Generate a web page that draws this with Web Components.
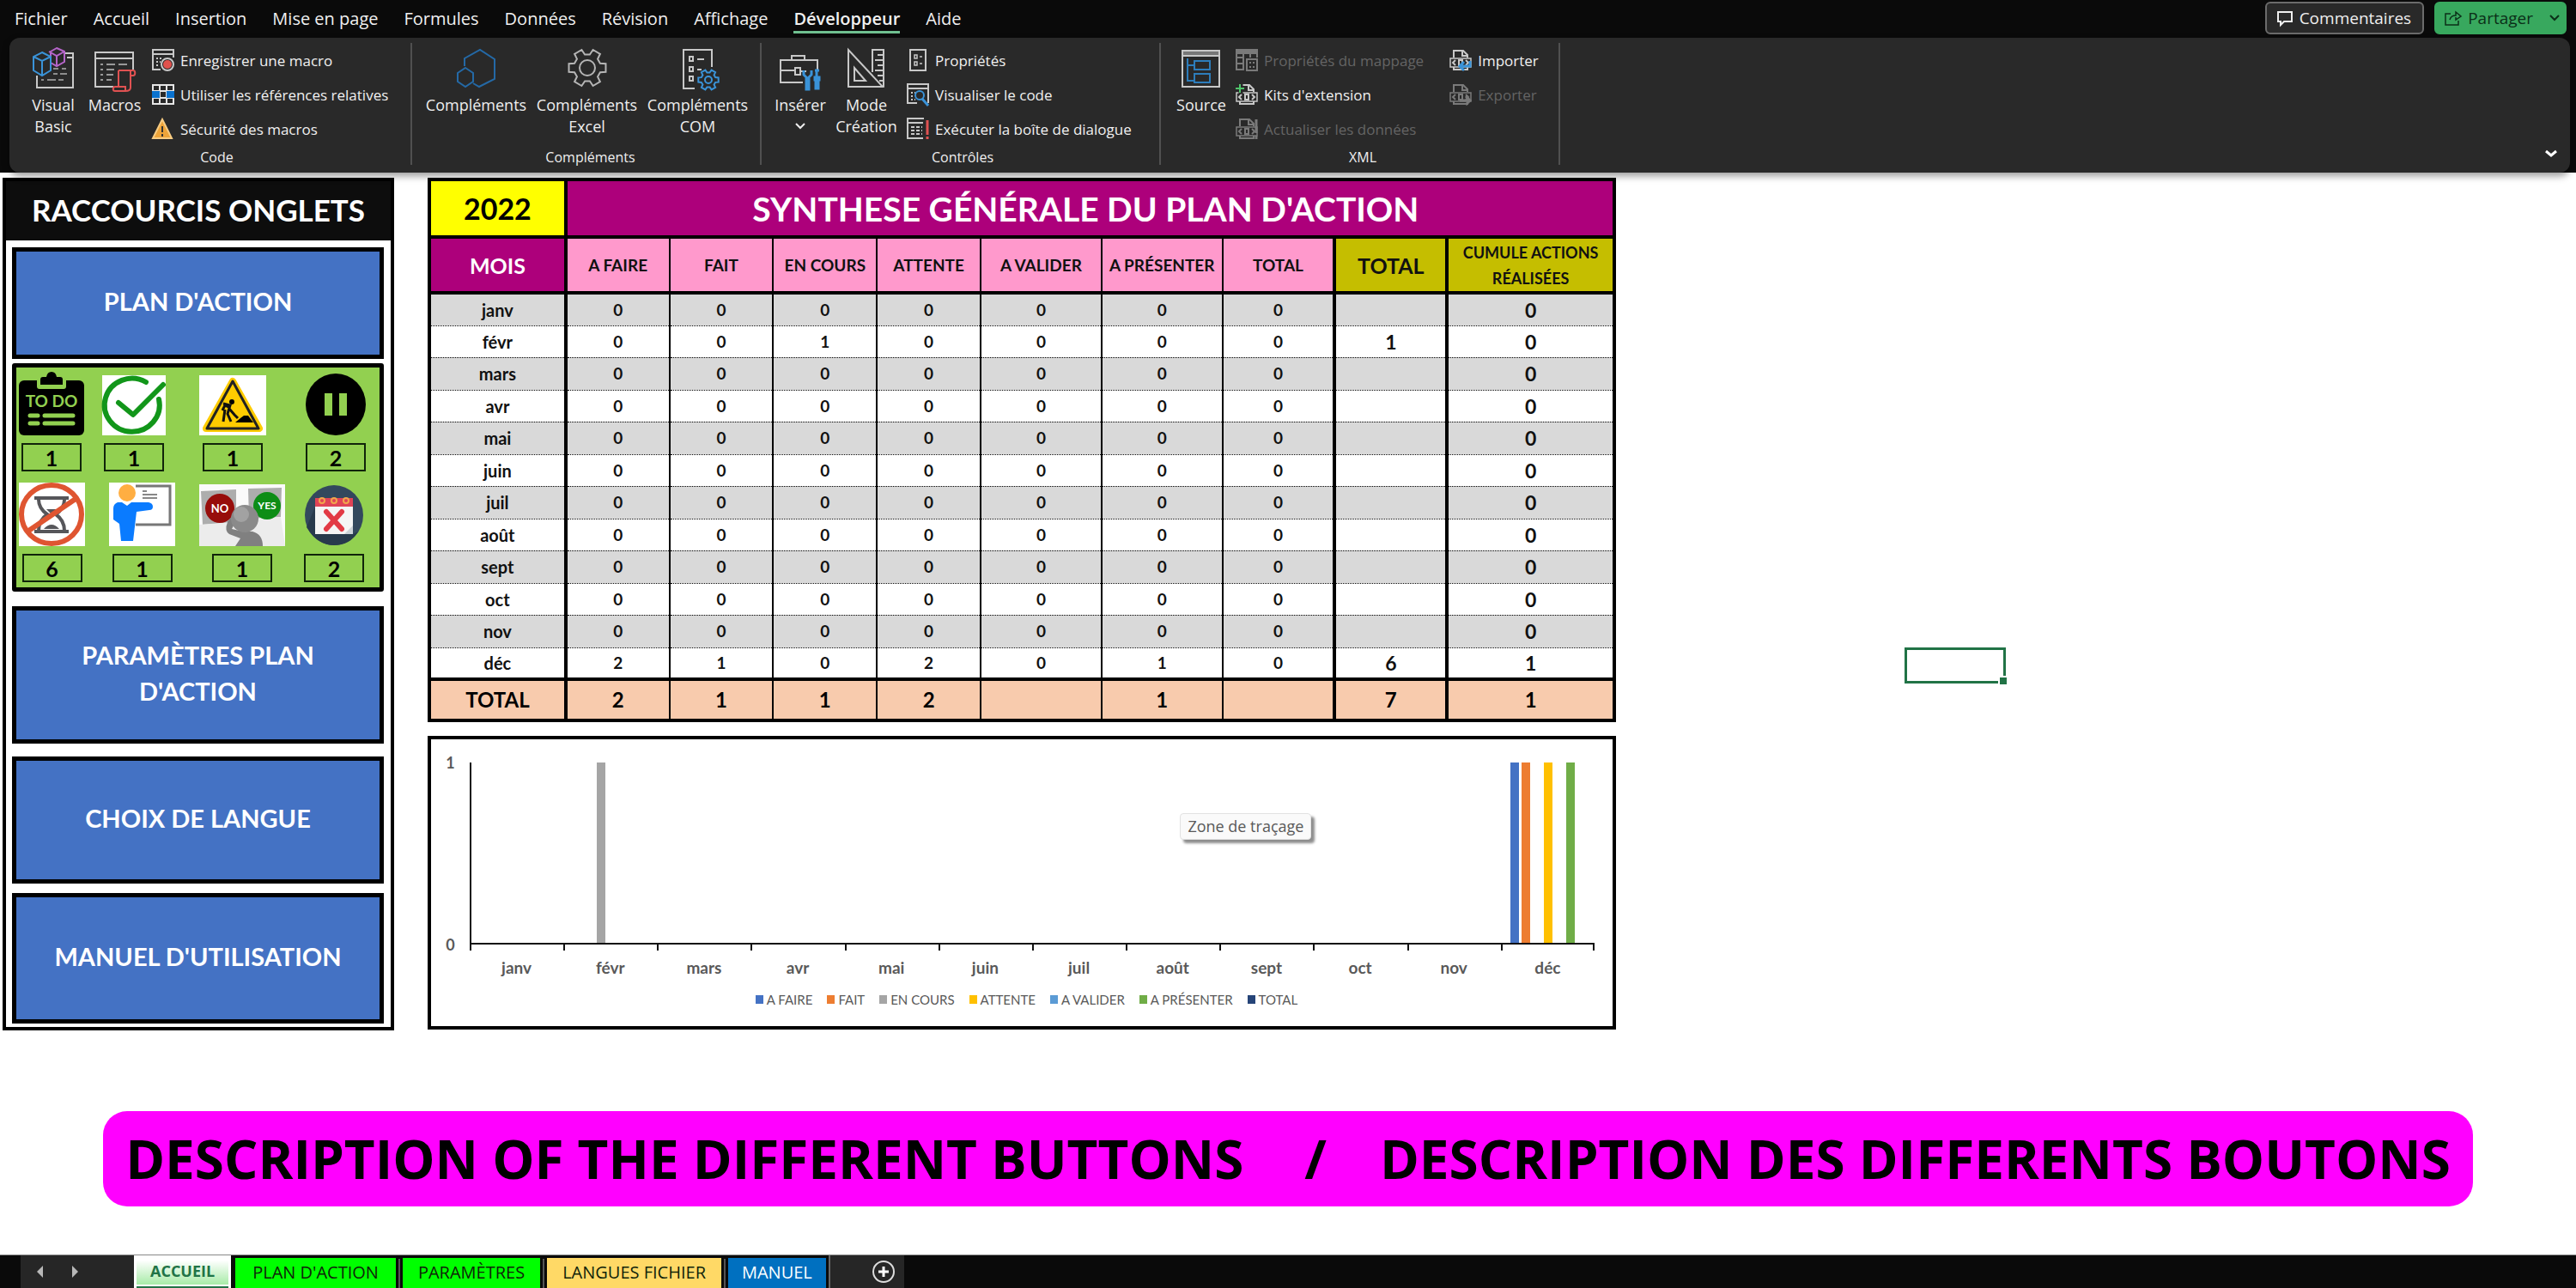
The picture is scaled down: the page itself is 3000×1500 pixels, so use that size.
<!DOCTYPE html>
<html lang="fr">
<head>
<meta charset="utf-8">
<title>Plan d'action</title>
<style>
  body { margin: 0; background: #fff; font-family: "Open Sans", "Noto Sans", sans-serif; }
</style>
</head>
<body>
<excel-app></excel-app>

<script>
const define = (name, render) => customElements.define(name, class extends HTMLElement {
  connectedCallback() {
    if (this.shadowRoot) return;
    const root = this.attachShadow({ mode: "open" });
    const t = document.createElement("template");
    t.innerHTML = typeof render === "function" ? render(this) : render;
    root.append(t.content.cloneNode(true));
  }
});

const G = "#c8c8c8", B = "#3a93d8", R = "#e05252", D = "#7a7a7a";
const gear = (cx, cy, rx, ry) => {
  let p = [];
  for (let i = 0; i < 6; i++) {
    const a = (i * 60 - 90) * Math.PI / 180;
    const at = (d, k) => `${(cx + rx * k * Math.cos(a + d)).toFixed(1)} ${(cy + ry * k * Math.sin(a + d)).toFixed(1)}`;
    p.push(at(-.34, .72), at(-.22, 1), at(.22, 1), at(.34, .72));
  }
  return `M${p.join("L")}Z`;
};
const xmlDoc = c => `<g fill="none" stroke="${c}" stroke-width="2"><path d="M5 10V2h11l5 5v3M15 2v6h6M5 21v3h16v-3"/><path d="M1 11h24v10H1z" stroke-width="1.5"/><path d="M7 13l-3 3 3 3M19 13l3 3-3 3M11 13h4v6h-4z"/></g>`;
const icons = {
  vb: [48, 48, `<g fill="none" stroke-width="2"><g stroke="${G}"><path d="M38 7h9v40H5V33M40 12h7"/><path d="M34 25h5M24 31h5m3 0h8M10 38h3m4 0h10m3 0h6M24 25h6" stroke="#8d8d8d"/></g><path stroke="#b565c9" d="M28 1l9 4v12l-9 5-7-4V5zM19 5l9 5 9-5M28 10v12"/><path stroke="${B}" d="M11 6l10 5v16l-10 6-10-6V11zM1 11l10 5 10-5M11 16v17"/></g>`],
  macros: [48, 52, `<g fill="none" stroke-width="2"><path stroke="${G}" d="M22 46H1V6h44v20M1 13h44"/><path stroke="#999" d="M7 20h3m4 0h10m4 0h10M7 26h3m4 0h9M7 32h3m4 0h8M7 38h3m4 0h6"/><path stroke="${R}" d="M28 27h17c3 0 3 6 0 6h-3v14c0 4-4 4-6 4H24c-3 0-3-5 0-5h4V27M24 46h12v5M42 33V28"/></g>`],
  record: [26, 26, `<g fill="none" stroke="${G}" stroke-width="2"><path d="M10 24H1V1h24v9M1 6h24"/><path stroke-dasharray="2 2" d="M5 11h8M5 15h5M5 19h4"/></g><circle cx="18" cy="18" r="7" fill="#292929" stroke="${G}" stroke-width="2"/><circle cx="18" cy="18" r="5" fill="#e0524d"/>`],
  grid: [26, 24, `<path fill="#e6e6e6" d="M0 0h26v24H0z"/><path fill="#292929" d="M2 2h6v5H2zm8 0h6v5h-6zm8 0h6v5h-6zM10 9h6v6h-6zM2 17h6v5H2zm8 0h6v5h-6zm8 0h6v5h-6z"/><path fill="#0a72cf" d="M0 8h9v8H0zM17 8h9v8h-9z"/>`],
  warn: [26, 26, `<path d="M12 2 23 24H1z" fill="#eda43a" stroke="#f8cc83" stroke-width="2"/><path d="M12 10v7m0 2v3" stroke="#333" stroke-width="2"/>`],
  hex: [48, 48, `<g fill="none" stroke="#2469a6" stroke-width="2"><path d="M10 22V13L28 3l17 11v23L27 46l-7-4"/><path d="M11 24l9 6v10l-9 6-9-6V30z"/></g>`],
  gear: [48, 48, `<g fill="none" stroke="#b5b5b5" stroke-width="2"><path transform="rotate(30 24 24)" d="${gear(24, 24, 22, 22)}"/><circle cx="24" cy="24" r="9"/></g>`],
  com: [48, 52, `<g fill="none" stroke-width="2" transform="translate(4)"><path stroke="${G}" d="M16 48H3V3h33v20M10 11h4v5h-4zM10 23h4v5h-4zM10 34h4v5h-4zM19 14h8M19 26h5"/><path stroke="${B}" transform="rotate(30 32 38)" d="${gear(32, 38, 12, 12)}"/><circle stroke="${B}" cx="32" cy="38" r="4"/></g>`],
  insert: [50, 52, `<g fill="none" stroke-width="2"><path stroke="${G}" d="M28 41H2V15h43v12M15 15v-5h15v5M2 27h17M19 24h6v8h-6zM25 28h7"/><path stroke="${B}" stroke-width="3" d="M29 27v5l3 3v14h3V35l3-3v-5M44 27v7m-2 1h5v3h-1v10h-3V38h-1zM42 27h5"/></g>`],
  design: [48, 48, `<g fill="none" stroke="${G}" stroke-width="2"><path d="M3 3v43h40zM10 24v15h13zM31 29V3h13v43M37 9h7M34 15h10M37 21h7M34 27h10M37 33h7M39 39h5"/></g>`],
  source: [48, 48, `<path fill="#777" d="M2 4h43v6H2z"/><g fill="none" stroke-width="2"><path stroke="${G}" d="M2 4h43v42H2zM2 10h43"/><path stroke="#2d7dbb" d="M8 13v26h8M8 21h8M16 16h18v10H16zM16 31h18v10H16z"/></g>`],
  props: [26, 26, `<g fill="none" stroke="${G}" stroke-width="2"><path d="M4 1h18v24H4z"/><path stroke-width="1.500" d="M9 7h3v4H9zM9 15h3v4H9zM15 9h3M15 17h3"/></g>`],
  code: [26, 26, `<g fill="none" stroke="${G}" stroke-width="2"><path d="M12 23H1V1h24v22M1 6h24"/><path stroke-dasharray="2 2" d="M5 11h5M5 15h4M5 19h5"/><g stroke="${B}"><circle cx="15" cy="14" r="5"/><path d="M18 18l7 8" stroke-width="3"/></g></g>`],
  run: [26, 26, `<g fill="none" stroke="${G}" stroke-width="2"><path d="M19 24H1V1h19M1 6h18"/><path stroke-dasharray="4 2" d="M5 11h13M5 15h13M5 19h13"/><path stroke="${R}" stroke-width="3" d="M24 3v17m0 2v3"/></g>`],
  map: [26, 26, `<path fill="${D}" d="M1 1h24v5H1z"/><g fill="none" stroke="${D}" stroke-width="2"><path d="M10 24H1V1h24v9M1 10h9M1 17h9M9 6v18M17 6v4M13 12h12v13H13z"/><path stroke-dasharray="2 2" d="M16 16h7M16 21h7"/></g>`],
  kit: [26, 26, xmlDoc(G) + `<path d="M0 6h12M6 0v12" stroke="#292929" stroke-width="5"/><path d="M0 6h10M5 1v10" stroke="#4fc46a" stroke-width="2"/>`],
  refresh: [26, 26, xmlDoc(D) + `<path d="M24 2v16m0 3v4" stroke="${D}" stroke-width="3"/>`],
  import: [26, 26, xmlDoc(G) + `<path d="M24 14v6H12m5-5-5 5 5 5" fill="none" stroke="${B}" stroke-width="3"/>`],
  export: [26, 26, xmlDoc(D) + `<path d="M12 20h12m-5-5 5 5-5 5" fill="none" stroke="${D}" stroke-width="3"/>`],
  chevron: [12, 8, `<path d="M1 1l5 5 5-5" fill="none" stroke="currentColor" stroke-width="2"/>`],
  more: [14, 10, `<path d="M1 2l6 5 6-5" fill="none" stroke="currentColor" stroke-width="3"/>`],
  comment: [20, 20, `<path d="M2 3h16v11H9l-4 4v-4H2z" fill="none" stroke="currentColor" stroke-width="2"/>`],
  share: [20, 20, `<path d="M7 5H1v13h15v-5M6 12c1-4 4-5 7-5V3l6 5-6 4V9" fill="none" stroke="currentColor" stroke-width="1.500"/>`],
  prev: [8, 14, `<path d="M8 0v14L1 7z" fill="#b8b8b8"/>`],
  next: [8, 14, `<path d="M0 0v14l7-7z" fill="#b8b8b8"/>`],
  plus: [28, 28, `<circle cx="14" cy="14" r="12" fill="none" stroke="#ddd" stroke-width="2"/><path d="M14 8v12M8 14h12" stroke="#fff" stroke-width="3"/>`],

  todo: [76, 74, `<rect y="10" width="76" height="64" rx="6"/><path d="M21 10h34v7q0 3-3 3H24q-3 0-3-3z" fill="#92d050"/><path d="M25 15V9q0-3 3-3h4q1-6 6-6t6 6h4q3 0 3 3v6z"/><text x="38" y="41" text-anchor="middle" font-family="Lato" font-weight="700" font-size="19" fill="#92d050">TO DO</text><path d="M13 51h9m8 0h33M13 60h9m8 0h33" stroke="#92d050" stroke-width="5" stroke-linecap="round"/>`],
  done: [74, 70, `<path fill="#fff" d="M0 0h74v70H0z"/><path d="M51 8A32 31 0 1 0 66 28M19 32l17 14L71 11" fill="none" stroke="#12961a" stroke-width="6" stroke-linecap="round" stroke-linejoin="round"/>`],
  works: [78, 70, `<path fill="#fff" d="M0 0h78v70H0z"/><path d="M39 7 70 62H8z" fill="#fc0" stroke="#fc0" stroke-width="8" stroke-linejoin="round"/><path d="M39 7 69 62H9z" fill="#fc0" stroke="#222" stroke-width="3" stroke-linejoin="round"/><circle cx="38" cy="31" r="3"/><path d="M28 33l8 2-3 10 4 9M30 40l-2 14M36 38l-6-3-3 6M35 39l6 7 4 4" fill="none" stroke="#111" stroke-width="3"/><path d="M42 55l6-5 4-3h5l6 8z"/>`],
  pause: [70, 72, `<ellipse cx="35" cy="36" rx="35" ry="36"/><path d="M22 23h9v26h-9zM39 23h9v26h-9z" fill="#92d050"/>`],
  late: [77, 74, `<path fill="#fff" d="M0 0h77v74H0z"/><g fill="none" stroke="#56565a" stroke-width="4"><path d="M18 18h40M18 57h40M23 20q0 10 10 17Q23 44 23 56M53 20q0 10-10 17 10 7 10 19"/></g><path d="M32 31h12l-6 6zM29 54q9-10 18 0z" fill="#56565a"/><ellipse cx="38" cy="37" rx="35" ry="34" fill="none" stroke="#df5531" stroke-width="6"/><path d="M10 57 66 19" stroke="#df5531" stroke-width="6"/>`],
  present: [77, 74, `<path fill="#fff" d="M0 0h77v74H0z"/><path d="M31 4h40v45H31" fill="none" stroke="#777" stroke-width="3"/><path d="M39 10h5M39 14h17M39 18h17" stroke="#888" stroke-width="2"/><circle cx="21" cy="12" r="10" fill="#ffae42"/><path fill="#0a7bff" d="M10 23h5l6 4 5-4h20q5 1 5 5 0 4-4 4l-15 2-4 34H14L12 48l-7-5V30q0-5 5-7z"/>`],
  choose: [100, 72, `<path fill="#fafafa" d="M0 0h100v72H0z"/><path d="M2 8l41-2v38L4 47zM57 5l39-1-1 34-37 2z" fill="#adadad"/><path d="M0 47l40-3 55-6 5 34H0z" fill="#ececec"/><circle cx="24" cy="28" r="17" fill="#970d0b"/><circle cx="79" cy="25" r="16" fill="#0d8d16"/><text x="24" y="33" text-anchor="middle" font-family="Lato" font-weight="700" font-size="13" fill="#fff">NO</text><text x="79" y="29" text-anchor="middle" font-family="Lato" font-weight="700" font-size="12" fill="#fff">YES</text><path d="M42 72l6-9-13-5q-6-4-2-14l5-7 3 9-3 6 13 3h11q12 3 12 17z" fill="#808080"/><circle cx="53" cy="40" r="16" fill="#8a8a8a"/><circle cx="49" cy="35" r="9" fill="#a2a2a2"/>`],
  calendar: [70, 72, `<ellipse cx="35" cy="36" rx="34" ry="35" fill="#33485d"/><path d="M3 50 13 26v32h44l6-3q-9 16-28 16T3 50z" fill="#283a4c"/><path d="M13 24h44v34H13z" fill="#f5f5f5"/><path d="M13 16h44v10H13z" fill="#e04356"/><g fill="none" stroke="#f2a64b" stroke-width="2"><circle cx="21" cy="19" r="3"/><circle cx="35" cy="19" r="3"/><circle cx="49" cy="19" r="3"/></g><path d="M26 32l18 20M44 32 26 52" stroke="#e23a45" stroke-width="6" stroke-linecap="round"/><path d="M47 58l10-10v10z" fill="#cdd3d8"/>`]
};

define("app-icon", el => {
  const [w, h, body] = icons[el.getAttribute("name")];
  return `<style>:host{display:block;flex:none}svg{display:block;overflow:visible}</style>
  <svg width="${w}" height="${h}" viewBox="0 0 ${w} ${h}" aria-hidden="true">${body}</svg>`;
});

define("menu-bar", () => `<style>
  :host{display:flex;align-items:center;justify-content:space-between;height:44px;padding:0 11px 0 17px;box-sizing:border-box}
  nav{display:flex;gap:30px}
  a{color:#f0f0f0;font-size:20px;line-height:28px;text-decoration:none;border-bottom:3px solid transparent;margin-top:2px}
  a.on{font-weight:600;border-color:#6fbf8f}
  .actions{display:flex;gap:12px;align-items:center;margin-bottom:3px}
  button{display:flex;align-items:center;gap:7px;height:38px;box-sizing:border-box;border-radius:6px;padding:0 13px 0 11px;font:19px "Open Sans",sans-serif;color:#eee;background:#292929;border:2px solid #6b6b6b}
  .share{background:#38a85e;border-color:#38a85e;color:#0b2f18;padding:0 6px 0 10px}
  .share app-icon:last-child{margin-left:12px}
</style>
<nav>${["Fichier","Accueil","Insertion","Mise en page","Formules","Données","Révision","Affichage","Développeur","Aide"].map(t => `<a href="#"${t === "Développeur" ? ' class="on"' : ""}>${t}</a>`).join("")}</nav>
<div class="actions">
  <button><app-icon name="comment"></app-icon>Commentaires</button>
  <button class="share"><app-icon name="share"></app-icon>Partager<app-icon name="chevron"></app-icon></button>
</div>`);

define("ribbon-group", el => `<style>
  :host{display:flex;flex-direction:column;box-sizing:border-box;border-right:2px solid #505050;height:142px}
  .body{display:flex;height:122px}
  .label{text-align:center;font-size:16px;line-height:26px;color:#eee}
</style><div class="body"><slot></slot></div><div class="label">${el.getAttribute("label")}</div>`);

define("ribbon-button", el => `<style>
  :host{display:block;width:var(--w,auto)}
  button{display:flex;flex-direction:column;align-items:center;width:100%;height:120px;padding:5px 0 0;border:0;background:none;color:#eee;font:18px/25px "Open Sans",sans-serif;white-space:nowrap}
  .pic{height:55px}
  .drop{padding-top:8px}
</style><button><span class="pic"><app-icon name="${el.getAttribute("icon")}"></app-icon></span><slot></slot>${el.hasAttribute("drop") ? '<app-icon class="drop" name="chevron"></app-icon>' : ""}</button>`);

define("ribbon-item", el => `<style>
  :host{display:block}
  button{display:flex;align-items:center;gap:7px;height:40px;padding:0;border:0;background:none;color:#f0f0f0;font:17px "Open Sans",sans-serif;white-space:nowrap}
  button:disabled{color:#646464}
</style><button${el.hasAttribute("off") ? " disabled" : ""}><app-icon name="${el.getAttribute("icon")}"></app-icon><slot></slot></button>`);

define("ribbon-panel", `<style>
  :host{display:flex;box-sizing:border-box;height:157px;margin:0 7px 0 11px;padding-top:6px;background:#292929;border-radius:12px;box-shadow:0 4px 8px rgba(0,0,0,.4);position:relative}
  .col{display:flex;flex-direction:column}
  .code{width:469px}.addins{width:407px}.controls{width:465px}.xml{width:465px}
  .code .col{margin-left:7px}.controls .col{margin-left:9px}
  .more{margin:auto 15px 17px auto;padding:0;border:0;background:none;color:#fff}
  .code{padding-left:16px}.addins{padding-left:10px}.controls{padding-left:5px}.xml{padding-left:7px}
  .controls .col,.xml .second{padding-left:1px}
  .second{margin-left:29px}
</style>
<ribbon-group class="code" label="Code">
  <ribbon-button icon="vb" style="--w:70px">Visual<br>Basic</ribbon-button>
  <ribbon-button icon="macros" style="--w:73px">Macros</ribbon-button>
  <div class="col"><ribbon-item icon="record">Enregistrer une macro</ribbon-item><ribbon-item icon="grid">Utiliser les références relatives</ribbon-item><ribbon-item icon="warn">Sécurité des macros</ribbon-item></div>
</ribbon-group>
<ribbon-group class="addins" label="Compléments">
  <ribbon-button icon="hex" style="--w:129px">Compléments</ribbon-button>
  <ribbon-button icon="gear" style="--w:129px">Compléments<br>Excel</ribbon-button>
  <ribbon-button icon="com" style="--w:129px">Compléments<br>COM</ribbon-button>
</ribbon-group>
<ribbon-group class="controls" label="Contrôles">
  <ribbon-button icon="insert" drop style="--w:80px">Insérer</ribbon-button>
  <ribbon-button icon="design" style="--w:74px">Mode<br>Création</ribbon-button>
  <div class="col"><ribbon-item icon="props">Propriétés</ribbon-item><ribbon-item icon="code">Visualiser le code</ribbon-item><ribbon-item icon="run">Exécuter la boîte de dialogue</ribbon-item></div>
</ribbon-group>
<ribbon-group class="xml" label="XML">
  <ribbon-button icon="source" style="--w:80px">Source</ribbon-button>
  <div class="col"><ribbon-item icon="map" off>Propriétés du mappage</ribbon-item><ribbon-item icon="kit">Kits d'extension</ribbon-item><ribbon-item icon="refresh" off>Actualiser les données</ribbon-item></div>
  <div class="col second"><ribbon-item icon="import">Importer</ribbon-item><ribbon-item icon="export" off>Exporter</ribbon-item></div>
</ribbon-group>
<button class="more" aria-label="Options du ruban"><app-icon name="more"></app-icon></button>`);

define("nav-button", `<style>
  :host{display:block}
  button{display:block;width:100%;height:100%;box-sizing:border-box;border:5px solid #000;background:#4472c4;color:#fff;padding:0 32px 4px;font:700 29px/42px Lato,sans-serif}
</style><button><slot></slot></button>`);

const stat = ([icon, n]) => `<div class="cell"><app-icon name="${icon}"></app-icon><span>${n}</span></div>`;
define("status-panel", `<style>
  :host{display:flex;flex-direction:column;justify-content:space-between;box-sizing:border-box;border:5px solid #000;border-radius:3px;background:#92d050;padding:4px 3px 6px}
  .row{display:grid;justify-items:start}
  .a{grid-template-columns:97px 113px 124px 1fr}
  .b{grid-template-columns:105px 105px 122px 1fr}
  .cell{display:flex;flex-direction:column;align-items:center;justify-content:flex-end;gap:9px;height:117px}
  span{width:70px;height:33px;box-sizing:border-box;border:2px solid #10240a;text-align:center;font:700 25px/30px Lato,sans-serif;color:#000}
</style>
<div class="row a">${[["todo",1],["done",1],["works",1],["pause",2]].map(stat).join("")}</div>
<div class="row b">${[["late",6],["present",1],["choose",1],["calendar",2]].map(stat).join("")}</div>`);

define("side-nav", `<style>
  :host{display:flex;flex-direction:column;box-sizing:border-box;border:4px solid #000;background:#fff}
  h2{margin:0;height:69px;background:#0d0d0d;color:#fff;text-align:center;font:700 35px/66px Lato,sans-serif}
  .list{display:flex;flex-direction:column;padding:8px 8px 4px 7px}
  .plan{height:130px}.panel{height:266px;margin:5px 0 17px}.params{height:160px}.lang{height:148px;margin:15px 0 11px}.manual{height:152px}
</style>
<h2>RACCOURCIS ONGLETS</h2>
<div class="list">
  <nav-button class="plan">PLAN D'ACTION</nav-button>
  <status-panel class="panel"></status-panel>
  <nav-button class="params">PARAMÈTRES PLAN D'ACTION</nav-button>
  <nav-button class="lang">CHOIX DE LANGUE</nav-button>
  <nav-button class="manual">MANUEL D'UTILISATION</nav-button>
</div>`);

const months = ["janv","févr","mars","avr","mai","juin","juil","août","sept","oct","nov","déc"];
const series = [["A FAIRE","#4472c4"],["FAIT","#ed7d31"],["EN COURS","#a5a5a5"],["ATTENTE","#ffc000"],["A VALIDER","#5b9bd5"],["A PRÉSENTER","#70ad47"],["TOTAL","#264478"]];
const data = months.map((m, i) => i === 1 ? [0,0,1,0,0,0,0,1,0] : i === 11 ? [2,1,0,2,0,1,0,6,1] : [0,0,0,0,0,0,0,"",0]);

define("summary-table", () => `<style>
  :host{display:block}
  table{width:100%;border-collapse:collapse;table-layout:fixed;border:4px solid #000;font:700 19px/24px Lato,sans-serif;color:#111;text-align:center}
  th,td{padding:0;border:2px solid #000}
  tr>:first-child,tr>:nth-child(8){border-right-width:4px}
  tr>:nth-child(9){border-right-width:4px}
  .top th{height:63px;border-bottom-width:4px}
  .year{background:#ff0;font-size:34px;color:#000}
  .top .title{background:#ad007b;color:#fff;font-size:39px;padding-right:10px}
  .head th{height:61px;background:#f9c;border-bottom:4px solid #000}
  .head .m{background:#ad007b;color:#fff;font-size:25px}
  .head .o{background:#c5be00}.head .t{font-size:25px}.head .c{font-size:18px;line-height:30px}
  tbody tr{height:37px}
  tbody tr:nth-child(odd){height:38px;background:#d9d9d9}
  tbody th,tbody td{border-top:1px dotted #000;border-bottom:1px dotted #000}
  tbody th{font-size:20px}
  tbody td:nth-child(n+9){font-size:23px}
  tfoot tr{height:48px;background:#f8cbad;font-size:24px;color:#000}
  tfoot th,tfoot td{border-top:4px solid #000}
</style>
<table>
  <colgroup>${[159,121,121,121,121,141,141,131,131,195].map(w => `<col style="width:${(w / 13.82).toFixed(3)}%">`).join("")}</colgroup>
  <thead>
    <tr class="top"><th class="year">2022</th><th class="title" colspan="9">SYNTHESE GÉNÉRALE DU PLAN D'ACTION</th></tr>
    <tr class="head"><th class="m">MOIS</th>${series.map(s => `<th>${s[0]}</th>`).join("")}<th class="o t">TOTAL</th><th class="o c">CUMULE ACTIONS RÉALISÉES</th></tr>
  </thead>
  <tbody>${data.map((r, i) => `<tr><th>${months[i]}</th>${r.map(v => `<td>${v}</td>`).join("")}</tr>`).join("")}</tbody>
  <tfoot><tr><th>TOTAL</th>${[2,1,1,2,"",1,"",7,1].map(v => `<td>${v}</td>`).join("")}</tr></tfoot>
</table>`);

define("bar-chart", () => `<style>
  :host{display:block;position:relative;box-sizing:border-box;border:4px solid #000;background:#fff;padding:27px 21px 0 0;height:342px;color:#595959;font:700 18px/20px Lato,sans-serif}
  .area{display:grid;grid-template-columns:45px 1fr}
  .y{display:flex;flex-direction:column;justify-content:space-between;margin:-10px 0;text-align:center}
  .plot{display:grid;grid-template-columns:repeat(12,1fr);height:210px;border-left:2px solid #111;border-bottom:2px solid #111}
  .month{display:grid;grid-template-columns:repeat(7,1fr);padding:0 9px;align-items:end;justify-items:center}
  .bar{width:10px;background:var(--c)}
  .ticks,.names{grid-column:2;display:grid;grid-template-columns:repeat(12,1fr)}
  .ticks i{height:7px;border-left:2px solid #111}
  .ticks i:last-child{border-right:2px solid #111}
  .names{padding-top:10px;text-align:center;font-size:19px}
  .legend{display:flex;justify-content:center;gap:17px;margin:17px 0 0 32px;font-weight:400;font-size:15px}
  .legend span{display:flex;align-items:center;gap:4px}
  .legend span::before{content:"";width:9px;height:10px;background:var(--c)}
  .tip{position:absolute;left:63.400%;top:86px;padding:0 8px;border:1px solid #e2e2e2;border-radius:4px;background:#fafafa;box-shadow:4px 4px 3px rgba(0,0,0,.45);font:18px/29px "Open Sans",sans-serif}
</style>
<div class="area">
  <div class="y"><span>1</span><span>0</span></div>
  <div class="plot">${data.map(r => `<div class="month">${series.map((s, k) => `<div class="bar" style="--c:${s[1]};height:${Math.min(r[k], 1) * 210}px"></div>`).join("")}</div>`).join("")}</div>
  <div class="ticks">${months.map(() => "<i></i>").join("")}</div>
  <div class="names">${months.map(m => `<span>${m}</span>`).join("")}</div>
</div>
<div class="legend">${series.map(s => `<span style="--c:${s[1]}">${s[0]}</span>`).join("")}</div>
<div class="tip">Zone de traçage</div>`);

define("cell-cursor", `<style>
  :host{display:block;position:relative;box-sizing:border-box;width:118px;height:42px;border:3px solid #217346}
  i{position:absolute;right:-6px;bottom:-6px;width:8px;height:8px;border:2px solid #fff;background:#217346}
</style><i></i>`);

define("title-banner", `<style>
  :host{display:flex;justify-content:center;align-items:center;width:92%;height:111px;margin:94px auto 0;border-radius:28px;background:#f0f;color:#000;font:700 62px/80px "Open Sans",sans-serif;white-space:nowrap}
  span{padding-bottom:2px}
  .slash{margin:0 62px 0 71px}
</style><span>DESCRIPTION OF THE DIFFERENT BUTTONS</span><span class="slash">/</span><span>DESCRIPTION DES DIFFERENTS BOUTONS</span>`);

define("sheet-tabs", `<style>
  :host{display:flex;align-items:stretch;height:39px;background:#0a0a0a;border-top:1px solid #888;box-sizing:border-box;padding-left:24px}
  .nav,.add{display:flex;align-items:center;background:#262626}
  .nav{width:132px;gap:34px;padding-left:18px;box-sizing:border-box}
  .nav button,.add button{border:0;padding:0;background:none}
  .nav app-icon{width:8px}
  a{box-sizing:border-box;margin:3px 3px 0;padding:0 20px;font-size:20px;line-height:34px;text-decoration:none;color:#10240a;background:#0f0}
  .home{margin:0 2px 0 0;padding:0 16px;font-weight:700;font-size:18px;line-height:36px;color:#217346;background:linear-gradient(#fff,#fff 15%,#9be89b);border:0 solid #fff;border-width:0 3px;box-shadow:inset 0 -2px #217346,inset 0 -4px #fff}
  .params{padding:0 18px}
  .lang{padding:0 18px;background:#ffd966}
  .man{background:#0070c0;color:#fff;padding:0 16px}
  .add{width:88px;justify-content:flex-end;padding-right:10px;box-sizing:border-box;border-left:2px solid #666}
  .sep{width:2px;background:#555;margin-top:4px}
</style>
<div class="nav"><button aria-label="Précédent"><app-icon name="prev"></app-icon></button><button aria-label="Suivant"><app-icon name="next"></app-icon></button></div>
<a class="home" href="#">ACCUEIL</a><a href="#">PLAN D'ACTION</a><i class="sep"></i><a class="params" href="#">PARAMÈTRES</a><i class="sep"></i><a class="lang" href="#">LANGUES FICHIER</a><i class="sep"></i><a class="man" href="#">MANUEL</a>
<div class="add"><button aria-label="Nouvelle feuille"><app-icon name="plus"></app-icon></button></div>`);

define("excel-app", `<style>
  :host{display:flex;flex-direction:column;min-height:100vh}
  header{background:#0a0a0a}
  main{flex:1;padding-bottom:40px}
  .sheet{display:grid;grid-template-columns:456fr 1384fr 1079fr;column-gap:39px;padding:6px 0 0 3px;align-items:start}
  .report{display:flex;flex-direction:column;gap:16px}
  .cursor{margin:547px 0 0 27.500%}
</style>
<header><menu-bar></menu-bar><ribbon-panel></ribbon-panel></header>
<main>
  <div class="sheet">
    <side-nav></side-nav>
    <div class="report"><summary-table></summary-table><bar-chart></bar-chart></div>
    <cell-cursor class="cursor"></cell-cursor>
  </div>
  <title-banner></title-banner>
</main>
<sheet-tabs></sheet-tabs>`);
</script>
</body>
</html>
